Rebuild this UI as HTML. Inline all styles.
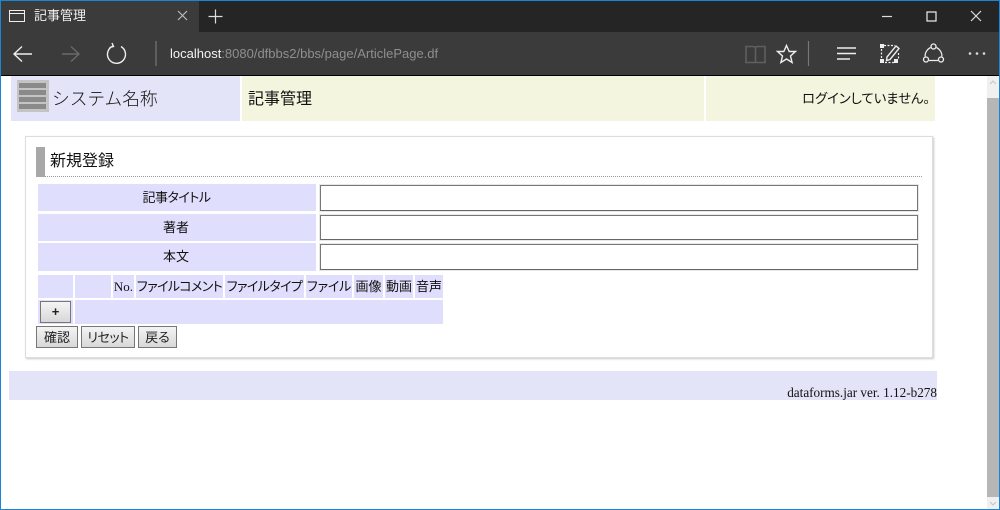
<!DOCTYPE html>
<html lang="ja"><head><meta charset="utf-8"><title>記事管理</title>
<style>
html,body{margin:0;padding:0;width:1000px;height:510px;overflow:hidden;background:#fff}
body{position:relative;font-family:"Liberation Sans","Noto Sans CJK JP",sans-serif;color:#111}
.a{position:absolute;box-sizing:border-box;white-space:nowrap}
.p{font-feature-settings:"palt"}
.l{background:#dfdffd;font-size:13px;text-align:center}
.i{background:#fff;border:1px solid #777;border-bottom-color:#666;box-shadow:0 0 0 1px #e8e8e8}
.h{background:#dfdffd;font-size:13px;text-align:center;top:275px;height:23px;line-height:24px;overflow:visible;font-feature-settings:"palt"}
.b{background:linear-gradient(#f4f4f4,#d8d8d8);border:1px solid #777;font-size:13px;text-align:center;color:#222;font-feature-settings:"palt"}
svg{position:absolute;left:0;top:0}
</style></head><body>
<div class="a" style="left:0;top:0;width:1000px;height:76px;background:#3b3b3b"></div>
<div class="a" style="left:199px;top:1px;width:800px;height:31px;background:#252525"></div>
<div class="a" style="left:0;top:75px;width:1000px;height:1px;background:#000"></div>
<div class="a" style="left:34px;top:6px;font-size:13px;line-height:20px;color:#f0f0f0">記事管理</div>
<div class="a" style="left:170px;top:44px;font-size:13px;line-height:20px;color:#8f8f8f"><span style="color:#f2f2f2">localhost</span>:8080/dfbbs2/bbs/page/ArticlePage.df</div>

<svg width="1000" height="76" fill="none" stroke="#eee" stroke-width="1.2">
<rect x="9.5" y="10.5" width="15" height="11" stroke-width="1"/><path d="M9 13.5h16" stroke-width="1"/>
<path d="M178 11l9 9M187 11l-9 9" stroke="#bbb"/>
<path d="M215.5 9.5v14M208.5 16.5h14" stroke="#ddd"/>
<path d="M882 16.5h10" stroke="#ddd"/>
<rect x="927" y="12" width="9" height="9" stroke="#eee" stroke-width="1.2"/>
<path d="M971 11l10 10M981 11l-10 10" stroke="#ddd"/>
<path d="M15 54h17M22 46.5l-8 7.5 8 7.5" stroke-width="1.4"/>
<path d="M62 54h17M71 46.5l8 7.5-8 7.5" stroke="#6a6a6a" stroke-width="1.4"/>
<path d="M113 46a9 9 0 1 0 8 .5M112 43l1.500 3.500-4 1" stroke-width="1.4"/>
<path d="M156 41v25" stroke="#777"/>
<path d="M746 46.500h7q2.500 0 2.500 2v14h-9.500zM755.500 48.500q0-2 2.500-2h7v16h-9.500zM745 62.500h21" stroke="#5f5f5f" stroke-width="1.600"/>
<path d="M786.500 45.500l2.700 6h6.300l-5 4.500 1.600 6.500-5.600-3.500-5.600 3.500 1.600-6.500-5-4.500h6.300z" stroke-width="1.400"/>
<path d="M808.500 41v25" stroke="#777"/>
<path d="M837 48h19M837 53.500h19M837 59h13" stroke-width="1.400"/>
<path d="M884 45.500h11M881.500 49v10M885 62.500h9M898.500 53v6" stroke-dasharray="2 1.500" stroke-width="1.200"/>
<g fill="#eee" stroke="none"><rect x="880" y="44" width="4" height="4"/><rect x="880" y="59" width="4" height="4"/><rect x="894" y="59" width="4" height="4"/></g>
<path d="M887 57l9-11 3 2.500-9 11-3.500 1z" stroke-width="1.400"/>
<circle cx="933.500" cy="46.500" r="2.500" stroke-width="1.300"/><circle cx="926" cy="59.500" r="2.500" stroke-width="1.300"/><circle cx="941" cy="59.500" r="2.500" stroke-width="1.300"/>
<path d="M930.500 47.500a10 10 0 0 0-5.500 9M936.500 47.500a10 10 0 0 1 5.500 9M929 60.500h9" stroke-width="1.300"/>
<g fill="#ddd" stroke="none"><circle cx="970" cy="53.500" r="1.300"/><circle cx="977" cy="53.500" r="1.300"/><circle cx="984" cy="53.500" r="1.300"/></g>
</svg>

<div class="a" style="left:11px;top:76px;width:229px;height:45px;background:#e4e4f8"></div>
<div class="a" style="left:17px;top:80px;width:32px;height:32px;background:#c4c4c4"></div>
<div class="a" style="left:19px;top:83px;width:27px;height:5px;background:#8a8a8a"></div>
<div class="a" style="left:19px;top:90px;width:27px;height:5px;background:#8a8a8a"></div>
<div class="a" style="left:19px;top:97px;width:27px;height:5px;background:#8a8a8a"></div>
<div class="a" style="left:19px;top:104px;width:27px;height:5px;background:#8a8a8a"></div>
<div class="a" style="left:52px;top:87px;font-size:17.700px;line-height:24px;color:#111;font-weight:300">システム名称</div>
<div class="a" style="left:242px;top:76px;width:462px;height:45px;background:#f4f5de"></div>
<div class="a" style="left:248px;top:88px;font-size:16px;line-height:23px;color:#111">記事管理</div>
<div class="a" style="left:706px;top:76px;width:229px;height:45px;background:#f4f5de"></div>
<div class="a p" style="right:70px;top:89px;font-size:13.300px;line-height:20px;color:#111">ログインしていません。</div>

<div class="a" style="left:987px;top:76px;width:12px;height:22px;background:#f0f0f0"></div>
<div class="a" style="left:987px;top:98px;width:12px;height:399px;background:#b6b6b6"></div>
<div class="a" style="left:987px;top:497px;width:12px;height:12px;background:#f0f0f0"></div>
<svg width="1000" height="510" fill="none" stroke="#c4c4c4" stroke-width="1"><path d="M990 84l3-3 3 3M990 502l3 3 3-3"/></svg>

<div class="a" style="left:25px;top:136px;width:908px;height:222px;background:#fff;border:1px solid #ddd;box-shadow:1px 1px 2px #c8c8c8"></div>
<div class="a" style="left:36px;top:147px;width:9px;height:30px;background:#a8a8a8"></div>
<div class="a" style="left:45px;top:176px;width:877px;height:0;border-top:1px dotted #999"></div>
<div class="a" style="left:50px;top:151px;font-size:16px;line-height:22px;color:#111">新規登録</div>

<div class="a l p" style="left:38px;top:184px;width:278px;height:27px;line-height:27px;letter-spacing:-.5px;padding-right:1px">記事タイトル</div>
<div class="a l" style="left:38px;top:214px;width:278px;height:27px;line-height:27px;padding-right:2px">著者</div>
<div class="a l" style="left:38px;top:243px;width:278px;height:28px;line-height:27px;padding-right:2px">本文</div>
<div class="a i" style="left:320px;top:185px;width:598px;height:26px"></div>
<div class="a i" style="left:320px;top:215px;width:598px;height:25px"></div>
<div class="a i" style="left:320px;top:244px;width:598px;height:26px"></div>

<div class="a h" style="left:38px;width:35px"></div>
<div class="a h" style="left:75px;width:36px"></div>
<div class="a h" style="left:113px;width:21px;font-family:'Liberation Serif',serif">No.</div>
<div class="a h" style="left:136px;width:87px;letter-spacing:-.6px">ファイルコメント</div>
<div class="a h" style="left:225px;width:79px;letter-spacing:-.6px">ファイルタイプ</div>
<div class="a h" style="left:306px;width:46px;letter-spacing:-.2px">ファイル</div>
<div class="a h" style="left:354px;width:29px">画像</div>
<div class="a h" style="left:385px;width:28px">動画</div>
<div class="a h" style="left:415px;width:28px">音声</div>

<div class="a" style="left:38px;top:300px;width:35px;height:24px;background:#dfdffd"></div>
<div class="a" style="left:75px;top:300px;width:368px;height:24px;background:#dfdffd"></div>
<div class="a b" style="left:40px;top:301px;width:31px;height:22px;line-height:19px;font-weight:bold">+</div>
<div class="a b" style="left:36px;top:326px;width:42px;height:22px;line-height:21px">確認</div>
<div class="a b" style="left:81px;top:326px;width:54px;height:22px;line-height:21px;letter-spacing:-.5px">リセット</div>
<div class="a b" style="left:138px;top:326px;width:39px;height:22px;line-height:21px">戻る</div>

<div class="a" style="left:9px;top:371px;width:928px;height:29px;background:#e4e4f8"></div>
<div class="a" style="right:63px;top:385px;font-family:'Liberation Serif',serif;font-size:13.200px;line-height:16px;color:#111">dataforms.jar ver. 1.12-b278</div>

<div class="a" style="left:0;top:0;width:1px;height:510px;background:#1b85d8"></div>
<div class="a" style="left:999px;top:0;width:1px;height:510px;background:#1b85d8"></div>
<div class="a" style="left:0;top:0;width:1000px;height:1px;background:#1b85d8"></div>
<div class="a" style="left:0;top:509px;width:1000px;height:1px;background:#1b85d8"></div>
</body></html>
